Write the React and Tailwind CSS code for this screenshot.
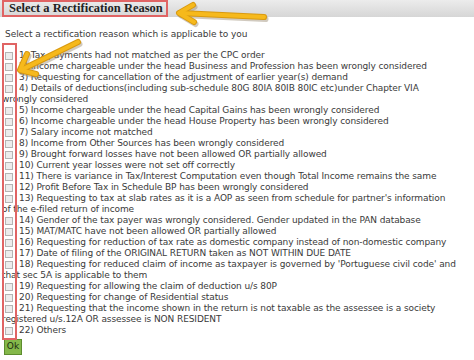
import React from "react";

const items = [
  ["1) Tax payments had not matched as per the CPC order"],
  ["2) Income chargeable under the head Business and Profession has been wrongly considered"],
  ["3) Requesting for cancellation of the adjustment of earlier year(s) demand"],
  ["4) Details of deductions(including sub-schedule 80G 80IA 80IB 80IC etc)under Chapter VIA", "wrongly considered"],
  ["5) Income chargeable under the head Capital Gains has been wrongly considered"],
  ["6) Income chargeable under the head House Property has been wrongly considered"],
  ["7) Salary income not matched"],
  ["8) Income from Other Sources has been wrongly considered"],
  ["9) Brought forward losses have not been allowed OR partially allowed"],
  ["10) Current year losses were not set off correctly"],
  ["11) There is variance in Tax/Interest Computation even though Total Income remains the same"],
  ["12) Profit Before Tax in Schedule BP has been wrongly considered"],
  ["13) Requesting to tax at slab rates as it is a AOP as seen from schedule for partner's information", "of the e-filed return of income"],
  ["14) Gender of the tax payer was wrongly considered. Gender updated in the PAN database"],
  ["15) MAT/MATC have not been allowed OR partially allowed"],
  ["16) Requesting for reduction of tax rate as domestic company instead of non-domestic company"],
  ["17) Date of filing of the ORIGINAL RETURN taken as NOT WITHIN DUE DATE"],
  ["18) Requesting for reduced claim of income as taxpayer is governed by 'Portuguese civil code' and", "that sec 5A is applicable to them"],
  ["19) Requesting for allowing the claim of deduction u/s 80P"],
  ["20) Requesting for change of Residential status"],
  ["21) Requesting that the income shown in the return is not taxable as the assessee is a society", "registered u/s.12A OR assessee is NON RESIDENT"],
  ["22) Others"],
];

export default function App() {
  return (
    <div className="relative w-[474px] h-[360px] overflow-hidden bg-white text-[#3a3a3a]" style={{ fontFamily: '"DejaVu Sans", Verdana, sans-serif' }}>
      <div className="h-[17px] bg-gradient-to-b from-[#ececec] to-[#d6d6d6] flex items-center">
        <div className="ml-[2px] h-[17px] w-[166px] border-2 border-[#e06464] flex items-center pl-[5px]">
          <span className="text-[12.5px] font-bold text-[#222] leading-none whitespace-nowrap" style={{ fontFamily: '"Liberation Serif", "Times New Roman", serif' }}>
            Select a Rectification Reason
          </span>
        </div>
      </div>
      <div className="mt-[12px] pl-[5px] text-[9px] leading-[11px] whitespace-nowrap tracking-[-0.05px]">
        Select a rectification reason which is applicable to you
      </div>
      <div className="mt-[10px] pl-[2px] text-[9px] leading-[11px] whitespace-nowrap tracking-[-0.1px]">
        {items.map((it, i) => (
          <div key={i}>
            <div className="flex items-center h-[11px]">
              <span className="ml-[3px] mr-[6px] w-[8px] h-[8px] border border-[#b4b4b4] bg-[#ececec] shrink-0" />
              <span>{it[0]}</span>
            </div>
            {it[1] && <div className="h-[11px]">{it[1]}</div>}
          </div>
        ))}
      </div>
      <div className="mt-[3px] ml-[4px] w-[18px] h-[16px] bg-[#84b84a] border border-[#5d8c2e] flex items-center justify-center text-[9px] text-[#1c2a10]">
        Ok
      </div>
      {/* red box around checkboxes */}
      <div className="absolute left-[2px] top-[43px] w-[15px] h-[297px] border-2 border-[#e06464]" />
      {/* arrows */}
      <svg className="absolute left-0 top-0" width="474" height="360" viewBox="0 0 474 360">
        <g fill="none" strokeLinecap="round" strokeLinejoin="round">
          <g stroke="#9a8a70" strokeOpacity="0.45" strokeWidth="6" transform="translate(1.5,2)">
            <path d="M264 17 L180 13" />
            <path d="M193 5 L179 13 L194 22" />
            <path d="M78 42 L21 70" />
            <path d="M27 54 L20 70 L36 74" />
          </g>
          <g stroke="#d99a10" strokeWidth="6">
            <path d="M264 17 L180 13" />
            <path d="M193 5 L179 13 L194 22" />
            <path d="M78 42 L21 70" />
            <path d="M27 54 L20 70 L36 74" />
          </g>
          <g stroke="#f6b91c" strokeWidth="4">
            <path d="M264 17 L180 13" />
            <path d="M193 5 L179 13 L194 22" />
            <path d="M78 42 L21 70" />
            <path d="M27 54 L20 70 L36 74" />
          </g>
        </g>
      </svg>
    </div>
  );
}
